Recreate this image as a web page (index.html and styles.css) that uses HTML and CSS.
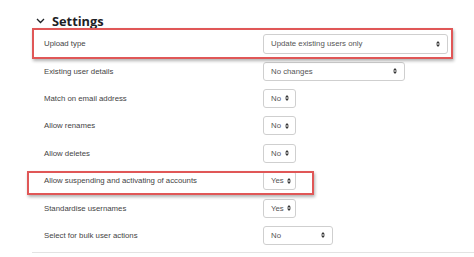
FILE: index.html
```html
<!DOCTYPE html>
<html lang="en">
<head>
    <meta charset="UTF-8">
    <meta name="viewport" content="width=device-width, initial-scale=1.0">
    <title>Upload users - Settings</title>
    <link rel="stylesheet" href="styles.css">
</head>
<body>
    <div class="settings">
        <h2 class="section-title">
            <svg class="chevron" width="9" height="6" viewBox="0 0 9 6"><path d="M1 1l3.5 3.5L8 1" fill="none" stroke="#1d2125" stroke-width="1.3"/></svg>
            Settings
        </h2>

        <div class="form-row">
            <label>Upload type</label>
            <div class="select select-wide select-tall"><span>Update existing users only</span><svg class="caret" width="4" height="6" viewBox="0 0 4 6"><path d="M0 2.4L2 0l2 2.4zM0 3.6L2 6l2-2.4z" fill="#333"/></svg></div>
        </div>
        <div class="form-row">
            <label>Existing user details</label>
            <div class="select select-medium"><span>No changes</span><svg class="caret" width="4" height="6" viewBox="0 0 4 6"><path d="M0 2.4L2 0l2 2.4zM0 3.6L2 6l2-2.4z" fill="#333"/></svg></div>
        </div>
        <div class="form-row">
            <label>Match on email address</label>
            <div class="select"><span>No</span><svg class="caret" width="4" height="6" viewBox="0 0 4 6"><path d="M0 2.4L2 0l2 2.4zM0 3.6L2 6l2-2.4z" fill="#333"/></svg></div>
        </div>
        <div class="form-row">
            <label>Allow renames</label>
            <div class="select"><span>No</span><svg class="caret" width="4" height="6" viewBox="0 0 4 6"><path d="M0 2.4L2 0l2 2.4zM0 3.6L2 6l2-2.4z" fill="#333"/></svg></div>
        </div>
        <div class="form-row">
            <label>Allow deletes</label>
            <div class="select"><span>No</span><svg class="caret" width="4" height="6" viewBox="0 0 4 6"><path d="M0 2.4L2 0l2 2.4zM0 3.6L2 6l2-2.4z" fill="#333"/></svg></div>
        </div>
        <div class="form-row">
            <label>Allow suspending and activating of accounts</label>
            <div class="select"><span>Yes</span><svg class="caret" width="4" height="6" viewBox="0 0 4 6"><path d="M0 2.4L2 0l2 2.4zM0 3.6L2 6l2-2.4z" fill="#333"/></svg></div>
        </div>
        <div class="form-row">
            <label>Standardise usernames</label>
            <div class="select"><span>Yes</span><svg class="caret" width="4" height="6" viewBox="0 0 4 6"><path d="M0 2.4L2 0l2 2.4zM0 3.6L2 6l2-2.4z" fill="#333"/></svg></div>
        </div>
        <div class="form-row">
            <label>Select for bulk user actions</label>
            <div class="select select-short"><span>No</span><svg class="caret" width="4" height="6" viewBox="0 0 4 6"><path d="M0 2.4L2 0l2 2.4zM0 3.6L2 6l2-2.4z" fill="#333"/></svg></div>
        </div>

        <!-- annotation boxes -->
        <div class="mark mark-upload"></div>
        <div class="mark mark-suspend"></div>
    </div>
</body>
</html>
```

FILE: styles.css
```css
body {
    margin: 0;
    padding: 0;
    background-color: #fff;
    font-family: 'Liberation Sans', Arial, sans-serif;
    color: #3a3a3a;
    width: 474px;
    height: 257px;
    overflow: hidden;
}
.settings {
    position: relative;
    margin-left: 32px;
    border-bottom: 1px solid #e3e3e3;
    padding-bottom: 3px;
}
.section-title {
    display: flex;
    align-items: center;
    gap: 7px;
    height: 30px;
    margin: 0;
    padding: 12px 0 0 4px;
    box-sizing: border-box;
    font-family: 'Open Sans', sans-serif;
    font-size: 12.8px;
    font-weight: 700;
    color: #1d2125;
}
.chevron {
    margin-top: -1px;
}
.form-row {
    display: flex;
    align-items: center;
    height: 27.4px;
}
.form-row label {
    width: 231px;
    padding-left: 12px;
    box-sizing: border-box;
    font-size: 7.8px;
    color: #444;
}
.select {
    display: flex;
    align-items: center;
    justify-content: space-between;
    width: 33px;
    height: 19px;
    padding: 0 6px 0 7px;
    box-sizing: border-box;
    border: 1px solid #cfcfcf;
    border-radius: 3px;
    font-size: 7.8px;
    color: #555;
}
.select-wide {
    width: 185px;
    padding-right: 7px;
}
.select-medium {
    width: 142px;
    padding-right: 7px;
}
.select-short {
    width: 70px;
    padding-right: 7px;
}
.select-tall {
    height: 20px;
}
.caret {
    flex-shrink: 0;
    margin-left: 3px;
}
.mark {
    position: absolute;
    border: 2px solid #e05757;
    box-shadow: 1px 2px 3px rgba(0, 0, 0, 0.3);
}
.mark-upload {
    left: 0;
    top: 28px;
    width: 417px;
    height: 27px;
}
.mark-suspend {
    left: -5px;
    top: 171px;
    width: 283px;
    height: 20px;
}
```
